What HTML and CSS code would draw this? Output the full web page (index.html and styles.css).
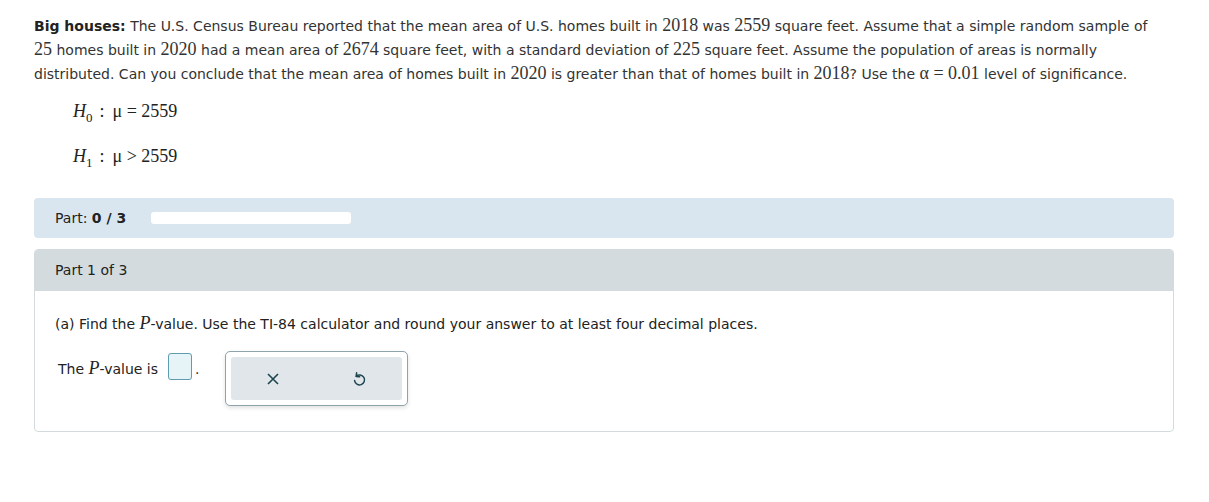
FILE: index.html
```html
<!DOCTYPE html>
<html>
<head>
<meta charset="utf-8">
<link rel="stylesheet" href="styles.css">
</head>
<body>
<div class="page">
  <p class="intro"><b>Big houses:</b> The U.S. Census Bureau reported that the mean area of U.S. homes built in <span class="m">2018</span> was <span class="m">2559</span> square feet. Assume that a simple random sample of <span class="m">25</span> homes built in <span class="m">2020</span> had a mean area of <span class="m">2674</span> square feet, with a standard deviation of <span class="m">225</span> square feet. Assume the population of areas is normally distributed. Can you conclude that the mean area of homes built in <span class="m">2020</span> is greater than that of homes built in <span class="m">2018</span>? Use the <span class="m">α = 0.01</span> level of significance.</p>
  <div class="hyp">
    <div class="hline"><i>H</i><sub>0</sub><span class="colon">:</span>μ = 2559</div>
    <div class="hline"><i>H</i><sub>1</sub><span class="colon">:</span>μ &gt; 2559</div>
  </div>
  <div class="partbar">
    <span>Part: <b>0 / 3</b></span>
    <div class="progress"></div>
  </div>
  <div class="card">
    <div class="card-head">Part 1 of 3</div>
    <div class="card-body">
      <p class="q">(a) Find the <i class="mi">P</i>-value. Use the TI-84 calculator and round your answer to at least four decimal places.</p>
      <div class="answer">
        <span class="lbl">The <i class="mi">P</i>-value is</span>
        <span class="box"></span><span class="dot">.</span>
        <div class="tools">
          <div class="tools-inner">
            <svg class="ico" width="14" height="14" viewBox="0 0 14 14"><path d="M2 2 L12 12 M12 2 L2 12" stroke="#1d4650" stroke-width="1.6" fill="none"/></svg>
            <svg class="ico" width="14" height="16" viewBox="0 0 14 16"><path d="M4.2 5.2 A5 5 0 1 1 2.6 9.6" stroke="#1d4650" stroke-width="1.5" fill="none" stroke-linecap="round"/><path d="M4.6 1.8 L4.2 5.4 L7.6 5.8" stroke="#1d4650" stroke-width="1.5" fill="none" stroke-linecap="round" stroke-linejoin="round"/></svg>
          </div>
        </div>
      </div>
    </div>
  </div>
</div>
</body>
</html>
```
FILE: styles.css
```css
html, body { margin: 0; padding: 0; background: #fff; }
body {
  font-family: "DejaVu Sans", Verdana, sans-serif;
  font-size: 14px;
  color: #333;
}
.page { padding: 14px 35px 0 34px; }
.intro { margin: 0; line-height: 24px; max-width: 1128px; }
.intro b { color: #222; }
.m, .mi {
  font-family: "Liberation Serif", "Times New Roman", serif;
  font-size: 18px;
  line-height: 1;
}
.hline {
  font-family: "Liberation Serif", "Times New Roman", serif;
  font-size: 18px;
}
.mi { font-style: italic; }
.hyp { padding: 15px 0 0 39px; }
.hline { height: 45px; line-height: 20px; color: #222; }
.hline sub { font-size: 13px; font-style: normal; line-height: 1; }
.colon { margin: 0 8px 0 7px; }
.partbar {
  margin-top: 7px;
  height: 40px;
  background: #dae6ef;
  border-radius: 4px;
  display: flex;
  align-items: center;
  padding-left: 21px;
  gap: 25px;
  color: #222;
}
.progress {
  width: 200px;
  height: 12px;
  background: #fff;
  border-radius: 3px;
}
.card {
  margin-top: 11px;
  border: 1px solid #d3dbde;
  border-radius: 4px;
  overflow: hidden;
}
.card-head {
  background: #d3dbde;
  height: 41px;
  line-height: 41px;
  padding-left: 20px;
  color: #222;
}
.card-body { padding: 23px 20px 24px 20px; height: 93px; }
.q { margin: 0; line-height: 18px; color: #222; }
.answer { display: flex; align-items: flex-start; margin-top: 17px; padding-left: 3px; }
.lbl { margin-top: 9px; color: #222; }
.box {
  display: inline-block;
  width: 22px; height: 25px;
  border: 1px solid #5f9cb0;
  background: #e6f4f8;
  border-radius: 3px;
  margin: 3px 0 0 10px;
}
.dot { margin-top: 11px; margin-left: 3px; }
.tools {
  margin-left: 25px;
  margin-top: 1px;
  width: 183px; height: 55px;
  border: 1px solid #8fa3ab;
  border-radius: 5px;
  padding: 5px;
  box-sizing: border-box;
  background: #fff;
  box-shadow: 0 2px 4px rgba(0,0,0,0.12);
}
.tools-inner {
  background: #e0e6e9;
  border-radius: 3px;
  height: 100%;
  display: flex;
  align-items: center;
  padding-left: 35px;
  gap: 72px;
}
.ico { display: block; }
```
